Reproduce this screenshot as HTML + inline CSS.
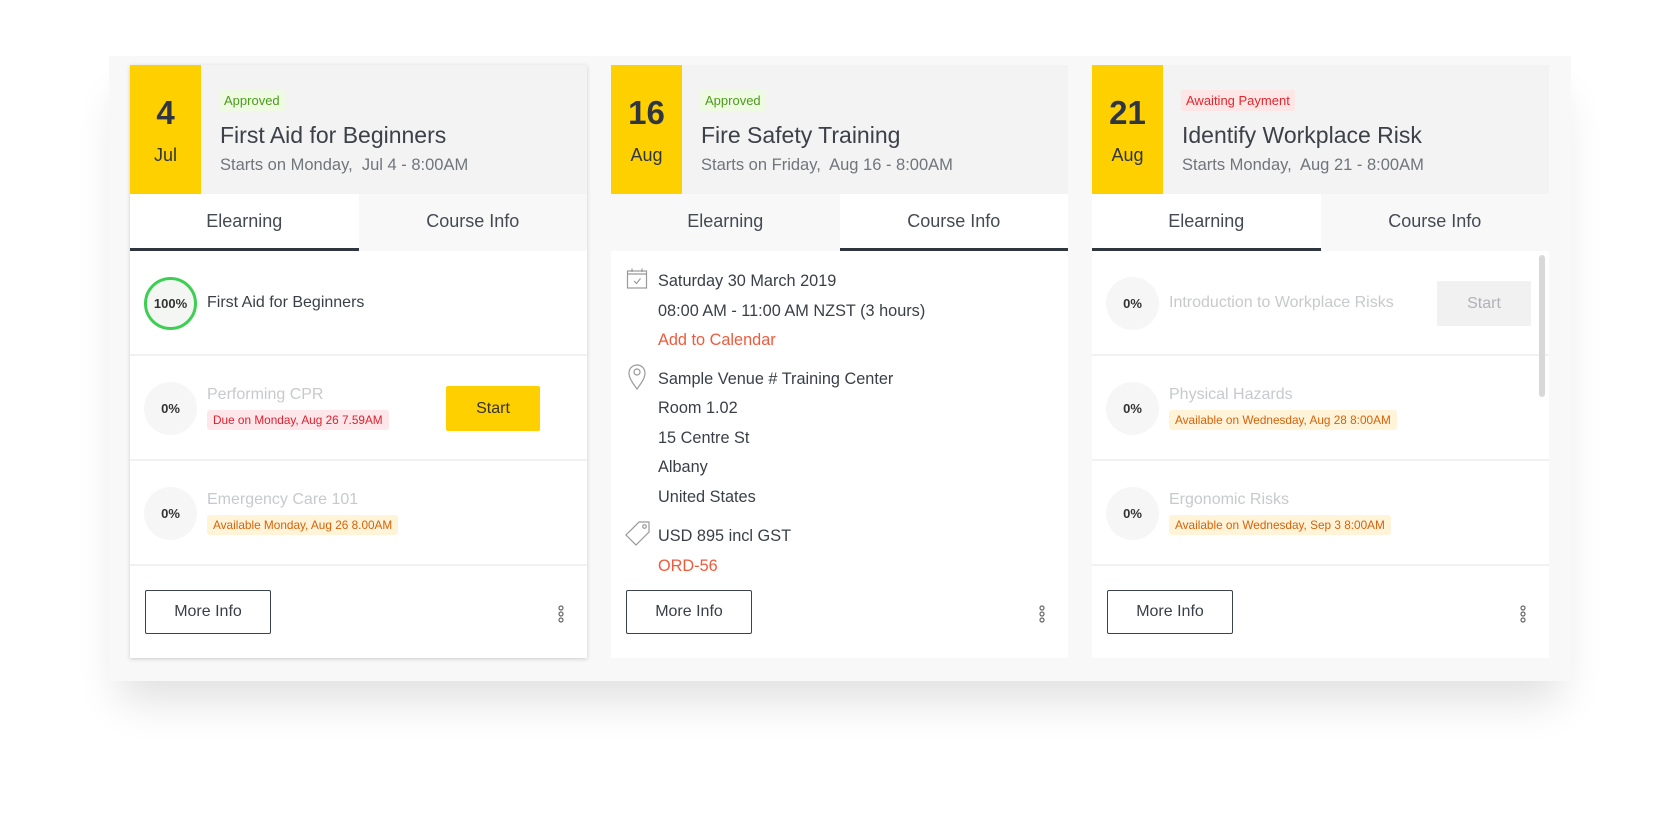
<!DOCTYPE html>
<html><head><meta charset="utf-8"><style>
*{box-sizing:border-box;margin:0;padding:0}
body{width:1680px;height:813px;background:#fff;font-family:"Liberation Sans",sans-serif;color:#3a3f47;position:relative;overflow:hidden}
.bg{position:absolute;left:109px;top:56px;width:1462px;height:625px;background:#f8f8f8;box-shadow:0 30px 40px -10px rgba(0,0,0,0.12)}
.card{position:absolute;top:65px;width:457px;height:593px;background:#fff}
.c1{left:130px;box-shadow:0 1px 4px rgba(0,0,0,0.18)}
.c2{left:611px}.c3{left:1092px}
.hd{height:129px;background:#f3f3f3;position:relative}
.date{position:absolute;left:0;top:0;width:71px;height:129px;background:#ffd000;text-align:center;color:#2f3640}
.date .n{font-size:33px;font-weight:bold;margin-top:30px;line-height:36px}
.date .m{font-size:18px;margin-top:14px}
.badge{position:absolute;left:89px;top:25px;font-size:13px;padding:3px 5px;border-radius:2px}
.ok{background:#eefbe2;color:#4d9a1e}
.pay{background:#fde6e6;color:#e3262e}
.title{position:absolute;left:90px;top:57px;font-size:23px;color:#3c4048}
.sub{position:absolute;left:90px;top:91px;font-size:16.5px;color:#70757c}
.tabs{display:flex;height:57px}
.tab{flex:1;text-align:center;font-size:18px;line-height:54px;background:#f8f8f8;color:#454a52}
.tab.on{background:#fff;border-bottom:3px solid #2f3640}
.row{height:105px;border-bottom:2px solid #f1f1f1;position:relative}
.circ{position:absolute;left:14px;width:53px;height:53px;border-radius:50%;background:#f5f6f5;font-size:13px;text-align:center;line-height:53px;color:#333;font-weight:bold}
.nm{position:absolute;left:77px;font-size:16px;color:#c7c9cc}
.tag{position:absolute;left:77px;font-size:11.8px;padding:3px 6px;border-radius:3px}
.due{background:#fde7ea;color:#e0202f}
.av{background:#fff3d8;color:#d6620a}
.start{position:absolute;width:94px;height:45px;font-size:16px;text-align:center;line-height:45px;border-radius:2px}
.more{position:absolute;left:15px;top:525px;width:126px;height:44px;border:1.5px solid #3a4350;border-radius:2px;font-size:16px;text-align:center;line-height:41px}
.keb{position:absolute;left:427px;top:540px}
.info{position:absolute;left:47px;font-size:16.3px;color:#3a3f47}
.red{color:#f05a3c}
</style></head><body>
<div class="bg"></div>

<div class="card c1">
 <div class="hd"><div class="date"><div class="n">4</div><div class="m">Jul</div></div>
  <span class="badge ok">Approved</span><div class="title">First Aid for Beginners</div><div class="sub">Starts on Monday,&nbsp; Jul 4 - 8:00AM</div></div>
 <div class="tabs"><div class="tab on">Elearning</div><div class="tab">Course Info</div></div>
 <div class="row">
  <div class="circ" style="top:26px;background:#f4f6f4;border:3px solid #3ccf52;line-height:47px">100%</div>
  <div class="nm" style="top:43px;color:#3a3f47">First Aid for Beginners</div></div>
 <div class="row">
  <div class="circ" style="top:26px">0%</div>
  <div class="nm" style="top:30px">Performing CPR</div>
  <div class="tag due" style="top:54px">Due on Monday, Aug 26 7.59AM</div>
  <div class="start" style="left:316px;top:30px;background:#ffd000;color:#333">Start</div></div>
 <div class="row">
  <div class="circ" style="top:26px">0%</div>
  <div class="nm" style="top:30px">Emergency Care 101</div>
  <div class="tag av" style="top:54px">Available Monday, Aug 26 8.00AM</div></div>
 <div class="more">More Info</div>
 <svg class="keb" width="8" height="20" viewBox="0 0 8 20"><g fill="none" stroke="#666" stroke-width="1.2"><circle cx="4" cy="3" r="2"/><circle cx="4" cy="9" r="2"/><circle cx="4" cy="15" r="2"/></g></svg>
</div>

<div class="card c2">
 <div class="hd"><div class="date"><div class="n">16</div><div class="m">Aug</div></div>
  <span class="badge ok">Approved</span><div class="title">Fire Safety Training</div><div class="sub">Starts on Friday,&nbsp; Aug 16 - 8:00AM</div></div>
 <div class="tabs"><div class="tab">Elearning</div><div class="tab on">Course Info</div></div>
 <svg style="position:absolute;left:15px;top:202px" width="22" height="22" viewBox="0 0 22 22"><g fill="none" stroke="#999" stroke-width="1.2"><rect x="1.5" y="4" width="19" height="17"/><line x1="1.5" y1="7" x2="20.5" y2="7"/><line x1="6" y1="1.5" x2="6" y2="5"/><line x1="16" y1="1.5" x2="16" y2="5"/><path d="M8 14l2.5 2.5 4-5"/></g></svg>
 <div class="info" style="top:207px">Saturday 30 March 2019</div>
 <div class="info" style="top:237px">08:00 AM - 11:00 AM NZST (3 hours)</div>
 <div class="info red" style="top:266px">Add to Calendar</div>
 <svg style="position:absolute;left:16px;top:298px" width="20" height="28" viewBox="0 0 20 28"><g fill="none" stroke="#999" stroke-width="1.2"><path d="M10 26C4 18 2 14 2 10a8 8 0 0 1 16 0c0 4-2 8-8 16z"/><circle cx="10" cy="9" r="3"/></g></svg>
 <div class="info" style="top:305px">Sample Venue # Training Center</div>
 <div class="info" style="top:334px">Room 1.02</div>
 <div class="info" style="top:364px">15 Centre St</div>
 <div class="info" style="top:393px">Albany</div>
 <div class="info" style="top:423px">United States</div>
 <svg style="position:absolute;left:14px;top:455px" width="26" height="26" viewBox="0 0 26 26"><g fill="none" stroke="#999" stroke-width="1.2"><path d="M14 2h10v10L11 25 1 15z"/><circle cx="19.5" cy="6.5" r="1.8"/></g></svg>
 <div class="info" style="top:462px">USD 895 incl GST</div>
 <div class="info red" style="top:492px">ORD-56</div>
 <div class="more">More Info</div>
 <svg class="keb" width="8" height="20" viewBox="0 0 8 20"><g fill="none" stroke="#666" stroke-width="1.2"><circle cx="4" cy="3" r="2"/><circle cx="4" cy="9" r="2"/><circle cx="4" cy="15" r="2"/></g></svg>
</div>

<div class="card c3">
 <div class="hd"><div class="date"><div class="n">21</div><div class="m">Aug</div></div>
  <span class="badge pay">Awaiting Payment</span><div class="title">Identify Workplace Risk</div><div class="sub">Starts Monday,&nbsp; Aug 21 - 8:00AM</div></div>
 <div class="tabs"><div class="tab on">Elearning</div><div class="tab">Course Info</div></div>
 <div class="row">
  <div class="circ" style="top:26px">0%</div>
  <div class="nm" style="top:43px">Introduction to Workplace Risks</div>
  <div class="start" style="left:345px;top:30px;background:#f1f1f1;color:#b0b2b5">Start</div></div>
 <div class="row">
  <div class="circ" style="top:26px">0%</div>
  <div class="nm" style="top:30px">Physical Hazards</div>
  <div class="tag av" style="top:54px">Available on Wednesday, Aug 28 8:00AM</div></div>
 <div class="row">
  <div class="circ" style="top:26px">0%</div>
  <div class="nm" style="top:30px">Ergonomic Risks</div>
  <div class="tag av" style="top:54px">Available on Wednesday, Sep 3 8:00AM</div></div>
 <div style="position:absolute;left:447px;top:190px;width:6px;height:142px;border-radius:3px;background:#d8d8d8"></div>
 <div class="more">More Info</div>
 <svg class="keb" width="8" height="20" viewBox="0 0 8 20"><g fill="none" stroke="#666" stroke-width="1.2"><circle cx="4" cy="3" r="2"/><circle cx="4" cy="9" r="2"/><circle cx="4" cy="15" r="2"/></g></svg>
</div>
</body></html>
